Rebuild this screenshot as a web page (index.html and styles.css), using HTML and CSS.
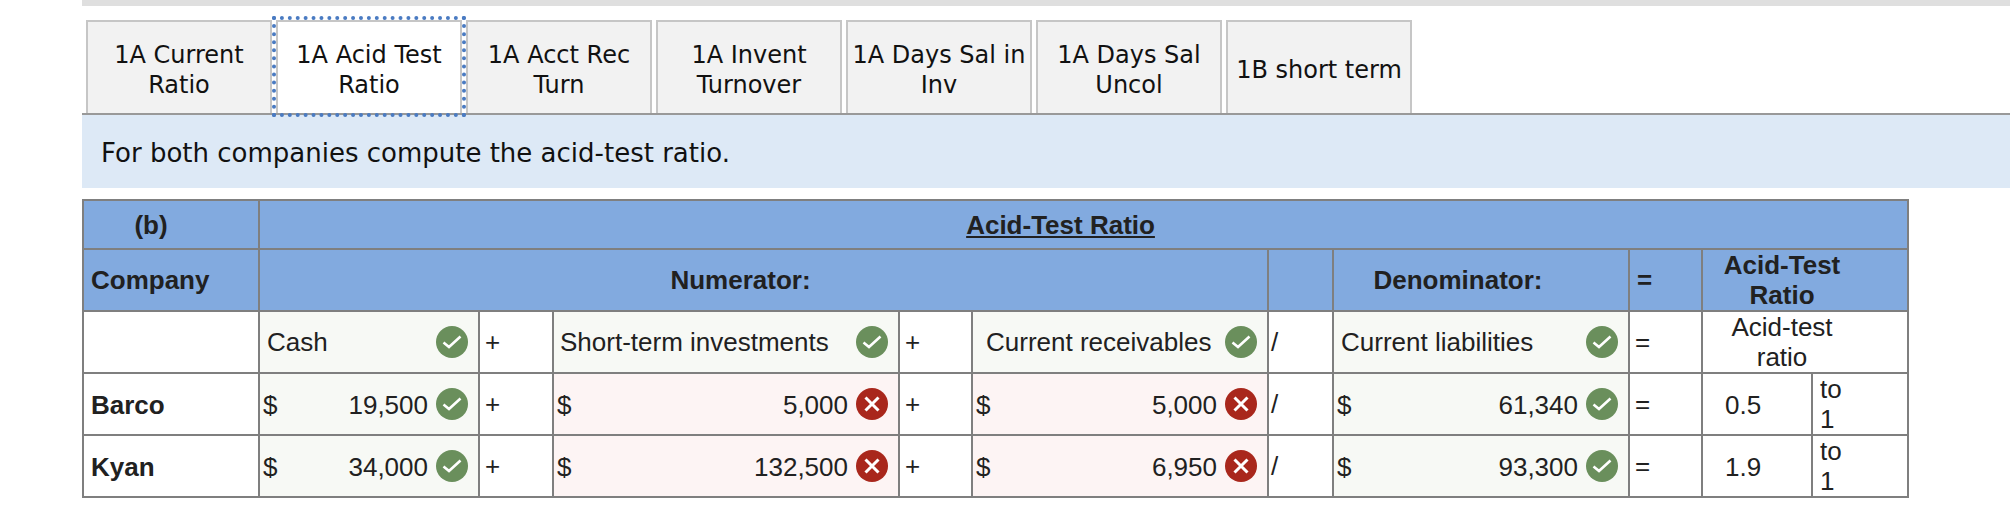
FILE: index.html
```html
<!DOCTYPE html>
<html lang="en">
<head>
<meta charset="utf-8">
<title>Acid-Test Ratio</title>
<link rel="stylesheet" href="styles.css">
</head>
<body>
<svg class="defs" width="0" height="0" aria-hidden="true">
  <symbol id="ok" viewBox="0 0 32 32"><circle cx="16" cy="16" r="16" fill="#6a8f5c"/><path d="M7.5 16.5l5.5 4.5L24.5 10.5" fill="none" stroke="#fff" stroke-width="2.6"/></symbol>
  <symbol id="bad" viewBox="0 0 32 32"><circle cx="16" cy="16" r="16" fill="#a9271c"/><path d="M9.5 9.5l13 13M22.5 9.5l-13 13" fill="none" stroke="#fff" stroke-width="3"/></symbol>
</svg>
<main class="page">
  <div class="topbar"></div>
  <nav class="tabs">
    <div class="tab t1">1A Current Ratio</div>
    <div class="tab t2 active">1A Acid Test Ratio</div>
    <div class="tab t3">1A Acct Rec Turn</div>
    <div class="tab t4">1A Invent Turnover</div>
    <div class="tab t5">1A Days Sal in Inv</div>
    <div class="tab t6">1A Days Sal Uncol</div>
    <div class="tab t7">1B short term</div>
  </nav>
  <div class="prompt">For both companies compute the acid-test ratio.</div>
  <table class="sheet">
    <colgroup>
      <col class="c-name"><col class="c-cash"><col class="c-plus"><col class="c-short"><col class="c-plus2"><col class="c-recv"><col class="c-slash"><col class="c-liab"><col class="c-eq"><col class="c-val"><col class="c-to">
    </colgroup>
    <tr class="r1 head">
      <th class="ctr part">(b)</th>
      <th class="ctr" colspan="10"><u>Acid-Test Ratio</u></th>
    </tr>
    <tr class="r2 head">
      <th class="left">Company</th>
      <th class="ctr" colspan="5">Numerator:</th>
      <th></th>
      <th class="ctr">Denominator:</th>
      <th class="left">=</th>
      <th class="ctr" colspan="2">Acid-Test Ratio</th>
    </tr>
    <tr class="r3">
      <td></td>
      <td class="good"><div class="field lab"><span>Cash</span><svg class="ico"><use href="#ok"/></svg></div></td>
      <td class="op">+</td>
      <td class="good"><div class="field tight"><span>Short-term investments</span><svg class="ico"><use href="#ok"/></svg></div></td>
      <td class="op">+</td>
      <td class="good"><div class="field wide"><span>Current receivables</span><svg class="ico"><use href="#ok"/></svg></div></td>
      <td class="op slash">/</td>
      <td class="good"><div class="field lab"><span>Current liabilities</span><svg class="ico"><use href="#ok"/></svg></div></td>
      <td class="op">=</td>
      <td class="ctr" colspan="2">Acid-test ratio</td>
    </tr>
    <tr class="r4">
      <td class="name">Barco</td>
      <td class="good"><div class="field"><span class="cur">$</span><span class="num">19,500</span><svg class="ico"><use href="#ok"/></svg></div></td>
      <td class="op">+</td>
      <td class="bad"><div class="field"><span class="cur">$</span><span class="num">5,000</span><svg class="ico"><use href="#bad"/></svg></div></td>
      <td class="op">+</td>
      <td class="bad"><div class="field"><span class="cur">$</span><span class="num">5,000</span><svg class="ico"><use href="#bad"/></svg></div></td>
      <td class="op slash">/</td>
      <td class="good"><div class="field"><span class="cur">$</span><span class="num">61,340</span><svg class="ico"><use href="#ok"/></svg></div></td>
      <td class="op">=</td>
      <td class="val">0.5</td>
      <td class="to">to<br>1</td>
    </tr>
    <tr class="r5">
      <td class="name">Kyan</td>
      <td class="good"><div class="field"><span class="cur">$</span><span class="num">34,000</span><svg class="ico"><use href="#ok"/></svg></div></td>
      <td class="op">+</td>
      <td class="bad"><div class="field"><span class="cur">$</span><span class="num">132,500</span><svg class="ico"><use href="#bad"/></svg></div></td>
      <td class="op">+</td>
      <td class="bad"><div class="field"><span class="cur">$</span><span class="num">6,950</span><svg class="ico"><use href="#bad"/></svg></div></td>
      <td class="op slash">/</td>
      <td class="good"><div class="field"><span class="cur">$</span><span class="num">93,300</span><svg class="ico"><use href="#ok"/></svg></div></td>
      <td class="op">=</td>
      <td class="val">1.9</td>
      <td class="to">to<br>1</td>
    </tr>
  </table>
</main>
</body>
</html>
```

FILE: styles.css
```css
* { box-sizing: border-box; }
html, body { margin: 0; padding: 0; background: #fff; }
body { overflow: hidden; }
.defs { position: absolute; }
.page { margin-left: 82px; }
.topbar { height: 6px; background: #dfdfdf; }

.tabs {
  display: flex;
  gap: 4px;
  height: 95px;
  margin-top: 14px;
  padding-left: 4px;
  border-bottom: 2px solid #999;
  font: 24px/30px "DejaVu Sans", sans-serif;
  color: #111;
}
.tab {
  display: flex;
  align-items: center;
  justify-content: center;
  text-align: center;
  width: 186px;
  height: 93px;
  padding: 5px 0 0;
  background: #f2f2f2;
  border: 2px solid #c6c6c6;
  border-bottom: 0;
}
.tab.active {
  background: #fff;
  outline: 4px dotted #4a7bc2;
  outline-offset: 0;
  position: relative;
}
.prompt {
  height: 73px;
  padding: 2px 0 0 19px;
  background: #dde9f6;
  display: flex;
  align-items: center;
  font: 26px/30px "DejaVu Sans", sans-serif;
  color: #111;
}

.sheet {
  margin: 11px 0 0;
  border-collapse: collapse;
  table-layout: fixed;
  width: 1825px;
  font: 26px/30px "Liberation Sans", Arial, sans-serif;
  color: #212121;
}
.c-name { width: 176px; }
.c-cash { width: 220px; }
.c-plus { width: 74px; }
.c-short { width: 346px; }
.c-plus2 { width: 73px; }
.c-recv { width: 296px; }
.c-slash { width: 65px; }
.c-liab { width: 296px; }
.c-eq { width: 73px; }
.c-val { width: 110px; }
.c-to { width: 96px; }

.sheet th, .sheet td { border: 2px solid #7f7f7f; padding: 0; }
.r1 { height: 49px; }
.r2 { height: 62px; }
.r3, .r4, .r5 { height: 62px; }
.head th { background: #82aadf; font-weight: 700; }
.ctr { text-align: center; padding-right: 46px !important; }
.ctr.part { padding-right: 40px !important; }
.left { text-align: left; padding-left: 7px !important; }
.name { font-weight: 700; padding: 2px 0 0 7px !important; }
.op { padding-left: 5px !important; }
.op.slash { padding-left: 2px !important; }
.val { padding: 2px 0 0 22px !important; }
.to { padding-left: 7px !important; }
.good { background: #f7f9f5; }
.bad { background: #fdf4f4; }

.field {
  display: flex;
  align-items: center;
  gap: 8px;
  padding: 0 10px 0 3px;
}
.field.lab { padding-left: 7px; justify-content: space-between; }
.field.tight { padding-left: 6px; justify-content: space-between; }
.field.wide { padding-left: 13px; justify-content: space-between; }
.cur, .num { padding-top: 2px; }
.num { margin-left: auto; }
.ico { width: 32px; height: 32px; flex: none; }
```
